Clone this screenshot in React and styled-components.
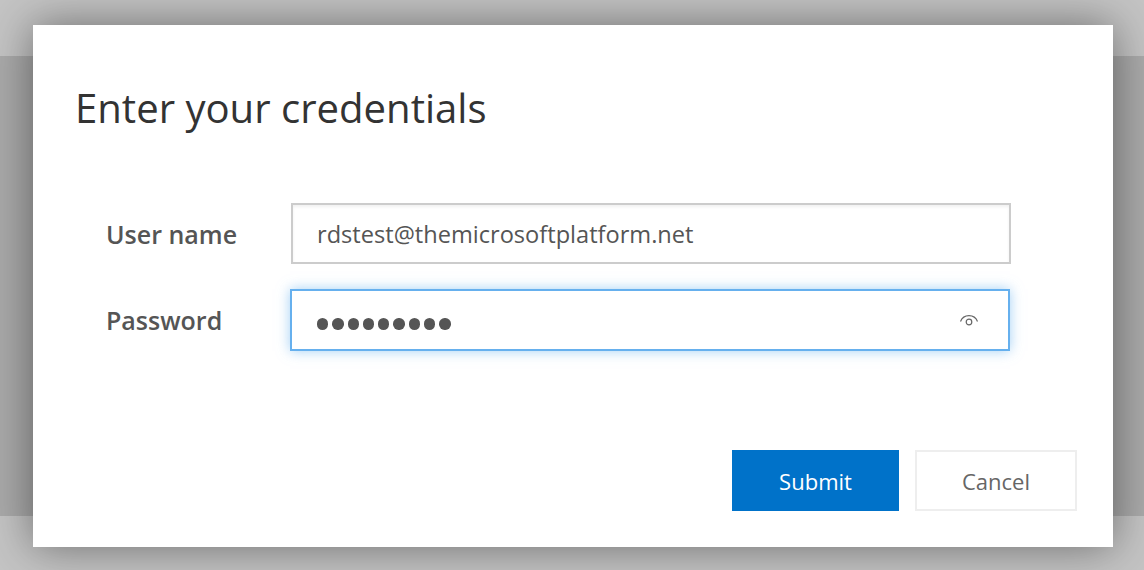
import React from 'react';
import styled, { createGlobalStyle } from 'styled-components';

const GlobalStyle = createGlobalStyle`
  html, body {
    margin: 0;
    padding: 0;
    height: 100%;
    overflow: hidden;
    font-family: "Open Sans", "Noto Sans", "Liberation Sans", sans-serif;
  }
`;

function EyeIcon() {
  return (
    <svg width="20" height="14" viewBox="0 0 20 14" fill="none" stroke="#666" strokeWidth="1.2">
      <path d="M1.5 8.5C3 4.6 6 2.6 10 2.6s7 2 8.5 5.9" />
      <circle cx="10" cy="9" r="2.8" />
    </svg>
  );
}

function Field({ label, focused, children }) {
  return (
    <Row>
      <Label>{label}</Label>
      <InputBox $focused={focused}>{children}</InputBox>
    </Row>
  );
}

export default function App() {
  return (
    <Page>
      <GlobalStyle />
      <TopBar />
      <Middle />
      <BottomBar />
      <Overlay>
        <Dialog>
          <Title>Enter your credentials</Title>
          <Form>
            <Field label="User name">
              <Value>rdstest@themicrosoftplatform.net</Value>
            </Field>
            <Field label="Password" focused>
              <Dots>
                {Array.from({ length: 9 }, (_, i) => (
                  <Dot key={i} />
                ))}
              </Dots>
              <EyeIcon />
            </Field>
          </Form>
          <Actions>
            <SubmitBtn>Submit</SubmitBtn>
            <CancelBtn>Cancel</CancelBtn>
          </Actions>
        </Dialog>
      </Overlay>
    </Page>
  );
}

const Page = styled.div`
  position: relative;
  width: 1144px;
  height: 570px;
  display: flex;
  flex-direction: column;
  overflow: hidden;
`;

const TopBar = styled.div`
  height: 56px;
  background: #c4c4c4;
`;

const Middle = styled.div`
  flex: 1;
  background: #aaaaaa;
`;

const BottomBar = styled.div`
  height: 54px;
  background: #c4c4c4;
`;

const Overlay = styled.div`
  position: absolute;
  inset: 0;
  padding: 25px 31px 23px 33px;
  box-sizing: border-box;
`;

const Dialog = styled.div`
  height: 522px;
  background: #fff;
  box-sizing: border-box;
  padding: 55px 36px 36px 42px;
  display: flex;
  flex-direction: column;
  box-shadow: 0 0 42px rgba(0, 0, 0, 0.45);
`;

const Title = styled.h1`
  margin: 0;
  font-size: 40.1px;
  line-height: 56px;
  font-weight: 400;
  color: #333;
`;

const Form = styled.div`
  margin-top: 67px;
  display: flex;
  flex-direction: column;
  gap: 25px;
`;

/* the focused box sits a pixel out to the left and is a pixel taller */
const Row = styled.div`
  display: flex;
  align-items: flex-start;
  padding-left: 31px;
`;

const Label = styled.div`
  width: 185px;
  height: 61px;
  display: flex;
  align-items: center;
  font-size: 25px;
  font-weight: 600;
  color: #555;
`;

const InputBox = styled.div`
  width: 720px;
  height: ${p => (p.$focused ? '62px' : '61px')};
  margin-left: ${p => (p.$focused ? '-1px' : '0')};
  box-sizing: border-box;
  display: flex;
  align-items: center;
  justify-content: space-between;
  padding: 0 29px 0 ${p => (p.$focused ? '25px' : '24px')};
  background: #fff;
  border: 2px solid ${p => (p.$focused ? '#66b0ee' : '#cccccc')};
  box-shadow: ${p =>
    p.$focused ? '0 0 12px rgba(102, 176, 238, 0.6)' : 'inset 0 2px 3px rgba(0, 0, 0, 0.06)'};
`;

const Value = styled.span`
  font-size: 23.6px;
  color: #555;
`;

const Dots = styled.div`
  display: flex;
  gap: 4px;
  margin-top: 8px;
`;

const Dot = styled.span`
  width: 11.3px;
  height: 11.3px;
  border-radius: 50%;
  background: #555;
`;

const Actions = styled.div`
  margin-top: auto;
  display: flex;
  justify-content: flex-end;
  gap: 16px;
`;

const SubmitBtn = styled.button`
  width: 167px;
  height: 61px;
  border: none;
  background: #0072c9;
  color: #fff;
  font: inherit;
  font-size: 22px;
`;

const CancelBtn = styled.button`
  width: 162px;
  height: 61px;
  border: 2px solid #eeeeee;
  background: #fff;
  color: #666;
  font: inherit;
  font-size: 22px;
`;
